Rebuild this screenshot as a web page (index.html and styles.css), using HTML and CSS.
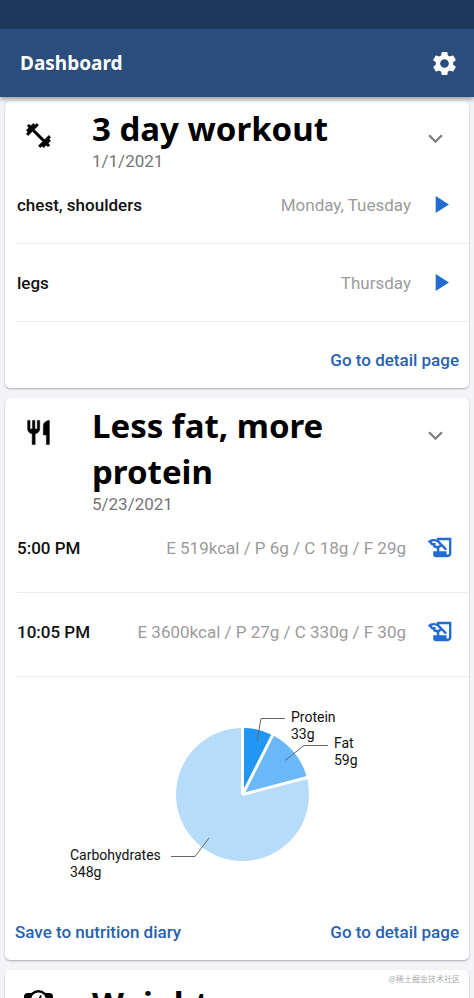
FILE: index.html
```html
<!DOCTYPE html>
<html lang="en">
<head>
<meta charset="utf-8">
<meta name="viewport" content="width=device-width, initial-scale=1">
<title>Dashboard</title>
<link rel="stylesheet" href="styles.css">
</head>
<body>
<svg class="sprite" aria-hidden="true">
  <symbol id="chevron" viewBox="0 0 24 24"><path d="M16.59 8.59L12 13.17 7.41 8.59 6 10l6 6 6-6z"/></symbol>
  <symbol id="play" viewBox="0 0 24 24"><path d="M8 5v14l11-7z"/></symbol>
  <symbol id="diary" viewBox="0 0 24 24"><path d="M9 4v1.38c-.83-.33-1.72-.5-2.61-.5-1.79 0-3.58.68-4.95 2.05l3.33 3.33h1.11v1.11c.86.86 1.98 1.31 3.11 1.36V15H6v3c0 1.1.9 2 2 2h10c1.66 0 3-1.34 3-3V4H9zm-1.11 6.41V8.26H5.61L4.57 7.22a5.07 5.07 0 0 1 1.82-.34c1.34 0 2.59.52 3.54 1.46l1.41 1.41-.2.2c-.51.51-1.19.8-1.92.8-.47 0-.93-.12-1.33-.34zM19 17c0 .55-.45 1-1 1s-1-.45-1-1v-2h-6v-2.59c.57-.23 1.1-.57 1.56-1.03l.2-.2L15.59 14H17v-1.41l-6-5.97V6h8v11z"/></symbol>
</svg>
<header class="top">
  <div class="status"></div>
  <div class="bar">
    <h1>Dashboard</h1>
    <button class="icon-btn" aria-label="Settings"><svg class="icon" viewBox="0 0 24 24"><path d="M19.14 12.94c.04-.3.06-.61.06-.94 0-.32-.02-.64-.07-.94l2.03-1.58c.18-.14.23-.41.12-.61l-1.92-3.32c-.12-.22-.37-.29-.59-.22l-2.39.96c-.5-.38-1.03-.7-1.62-.94l-.36-2.54c-.04-.24-.24-.41-.48-.41h-3.84c-.24 0-.43.17-.47.41l-.36 2.54c-.59.24-1.13.57-1.62.94l-2.39-.96c-.22-.08-.47 0-.59.22L2.74 8.87c-.12.21-.08.47.12.61l2.03 1.58c-.05.3-.09.63-.09.94s.02.64.07.94l-2.03 1.58c-.18.14-.23.41-.12.61l1.92 3.32c.12.22.37.29.59.22l2.39-.96c.5.38 1.03.7 1.62.94l.36 2.54c.05.24.24.41.48.41h3.84c.24 0 .44-.17.47-.41l.36-2.54c.59-.24 1.13-.56 1.62-.94l2.39.96c.22.08.47 0 .59-.22l1.92-3.32c.12-.22.07-.47-.12-.61l-2.01-1.58zM12 15.6c-1.98 0-3.6-1.62-3.6-3.6s1.62-3.6 3.6-3.6 3.6 1.62 3.6 3.6-1.62 3.6-3.6 3.6z"/></svg></button>
  </div>
</header>
<main>
  <section class="card">
    <div class="head">
      <svg class="icon lead" viewBox="0 0 24 24"><path d="M20.57 14.86L22 13.43 20.57 12 17 15.57 8.43 7 12 3.43 10.57 2 9.14 3.43 7.71 2 5.57 4.14 4.14 2.71 2.71 4.14l1.43 1.43L2 7.71l1.43 1.43L2 10.57 3.43 12 7 8.43 15.57 17 12 20.57 13.43 22l1.43-1.43L16.29 22l2.14-2.14 1.43 1.43 1.43-1.43-1.43-1.43L22 16.29z" stroke="#000" stroke-width="0.600"/></svg>
      <div class="title"><h2>3 day workout</h2><p>1/1/2021</p></div>
      <button class="icon-btn more" aria-label="Collapse workout"><svg class="icon"><use href="#chevron"/></svg></button>
    </div>
    <ul class="list">
      <li><strong>chest, shoulders</strong><span>Monday, Tuesday</span><button class="icon-btn" aria-label="Start chest, shoulders"><svg class="icon"><use href="#play"/></svg></button></li>
      <li><strong>legs</strong><span>Thursday</span><button class="icon-btn" aria-label="Start legs"><svg class="icon"><use href="#play"/></svg></button></li>
    </ul>
    <div class="actions"><a href="#workout">Go to detail page</a></div>
  </section>
  <section class="card">
    <div class="head">
      <svg class="icon lead" viewBox="0 0 24 24"><path d="M11 9H9V2H7v7H5V2H3v7c0 2.12 1.66 3.84 3.75 3.97V22h2.5v-9.03C11.34 12.84 13 11.12 13 9V2h-2v7zm5-3v8h2.5v8H21V2c-2.76 0-5 2.24-5 4z" stroke="#000" stroke-width="0.400"/></svg>
      <div class="title"><h2>Less fat, more protein</h2><p>5/23/2021</p></div>
      <button class="icon-btn more" aria-label="Collapse nutrition plan"><svg class="icon"><use href="#chevron"/></svg></button>
    </div>
    <ul class="list meals">
      <li><strong>5:00 PM</strong><span>E 519kcal / P 6g / C 18g / F 29g</span><button class="icon-btn" aria-label="Log 5:00 PM meal"><svg class="icon"><use href="#diary"/></svg></button></li>
      <li><strong>10:05 PM</strong><span>E 3600kcal / P 27g / C 330g / F 30g</span><button class="icon-btn" aria-label="Log 10:05 PM meal"><svg class="icon"><use href="#diary"/></svg></button></li>
    </ul>
    <svg class="chart" viewBox="0 0 464 217" role="img" aria-label="Nutrients">
      <circle cx="237.500" cy="117.500" r="66.500" fill="#b6dcf9"/>
      <path d="M237.500 117.500V51A66.500 66.500 0 0 1 267.600 58.200Z" fill="#2196f3"/>
      <path d="M237.500 117.500L267.600 58.200A66.500 66.500 0 0 1 301.800 100.500Z" fill="#6ab8f7"/>
      <path class="split" d="M237.500 49V117.500L268.300 56.800M237.500 117.500L304 100"/>
      <path class="leader" d="M252 64L256 41.500H280M280 83.500L299 68.500H323M204 161L190 179.500H166"/>
      <text x="286" y="45">Protein</text><text x="286" y="62">33g</text>
      <text x="329" y="71">Fat</text><text x="329" y="88">59g</text>
      <text x="65" y="183">Carbohydrates</text><text x="65" y="200">348g</text>
    </svg>
    <div class="actions"><a href="#diary-save">Save to nutrition diary</a><a href="#nutrition">Go to detail page</a></div>
  </section>
  <section class="card">
    <div class="head">
      <svg class="icon lead" viewBox="0 0 24 24"><rect y="2.500" width="24" height="21.500" rx="3"/><circle cx="12" cy="8" r="8"/><circle cx="12" cy="8" r="6" fill="#fff"/><path d="M12 10L14 4.500" stroke="#000" stroke-width="1.500"/><circle cx="12" cy="10.500" r="2"/></svg>
      <div class="title single"><h2>Weight</h2></div>
    </div>
  </section>
</main>
<div class="watermark">@稀土掘金技术社区</div>
</body>
</html>
```
FILE: styles.css
```css
* { box-sizing: border-box; }
body {
  margin: 0;
  height: 100vh;
  overflow: hidden;
  display: flex;
  flex-direction: column;
  background: #f4f4f8;
  color: #111;
  font: 17px/20px Roboto, "Noto Sans CJK SC", sans-serif;
}
h1, h2, p, ul { margin: 0; padding: 0; }
.sprite { display: none; }
.icon { display: block; width: 29px; height: 29px; fill: currentColor; flex: none; }
.icon-btn { border: 0; padding: 0; background: none; color: inherit; flex: none; }
.top {
  flex: none;
  z-index: 1;
  background: #2a4d7b;
  color: #fff;
  box-shadow: 0 2px 5px rgba(0, 0, 0, .4);
}
.status { height: 29px; background: #1f375b; }
.bar {
  height: 68px;
  padding: 0 15px 0 20px;
  display: flex;
  align-items: center;
  justify-content: space-between;
}
h1 { font: 700 19px/26px "Noto Sans", sans-serif; }
main {
  flex: 1;
  min-height: 0;
  overflow: hidden;
  padding: 4px 5px 0;
  display: flex;
  flex-direction: column;
  gap: 10px;
}
.card {
  flex: none;
  background: #fff;
  border-radius: 5px;
  box-shadow: 0 1px 2px rgba(0, 0, 0, .3);
}
.head { display: flex; align-items: flex-start; padding: 5px 19px 0; }
.lead { margin: 15px 39px 0 0; color: #000; }
.title { flex: 1; }
.single { padding-top: 6px; }
h2 { color: #000; font: 700 33px/46px "Noto Sans", sans-serif; }
.title p { color: #757575; line-height: 18px; }
.more { margin-top: 18px; color: #808080; }
.list { list-style: none; margin: -4px 0 0 12px; }
.list li {
  height: 78px;
  padding-right: 14px;
  display: flex;
  align-items: center;
  gap: 15px;
  border-bottom: 1px solid #ebebeb;
  color: #226bd2;
}
.meals li { height: 84px; padding-bottom: 6px; gap: 20px; }
.list strong { font-weight: 500; color: #111; }
.list span { flex: 1; text-align: right; color: #9b9b9b; }
.chart { display: block; width: 100%; height: 217px; font-size: 14px; }
.chart text { fill: #111; }
.split { fill: none; stroke: #fff; stroke-width: 3; }
.leader { fill: none; stroke: #666; stroke-width: 1; }
.actions {
  display: flex;
  justify-content: space-between;
  padding: 28px 10px 18px;
}
.actions a { color: #2862af; font-weight: 500; text-decoration: none; }
.actions a:only-child { margin-left: auto; }
.watermark {
  position: absolute;
  right: 14px;
  bottom: 11px;
  color: #aaa;
  font: 8px/16px "Noto Sans CJK SC", sans-serif;
}
```
